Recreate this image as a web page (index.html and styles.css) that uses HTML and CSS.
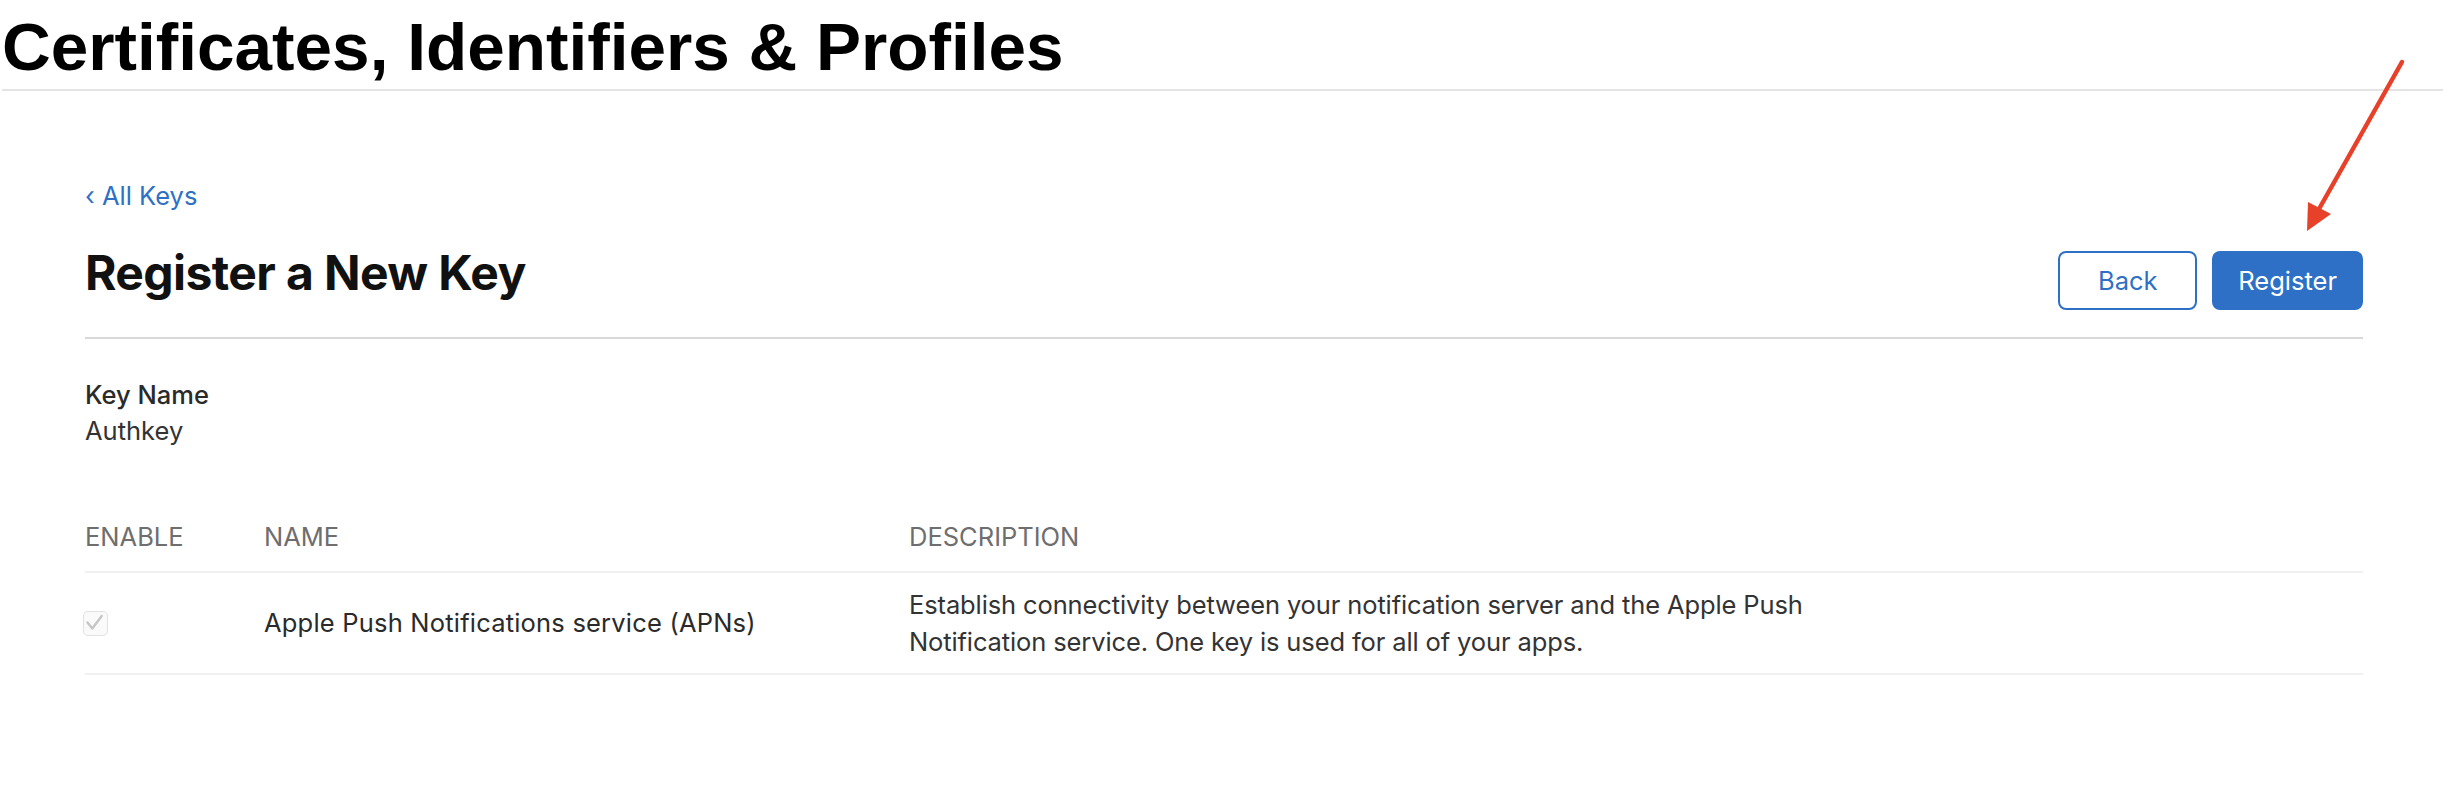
FILE: index.html
```html
<!DOCTYPE html>
<html lang="en">
<head>
<meta charset="utf-8">
<title>Register a New Key - Certificates, Identifiers &amp; Profiles</title>
<link rel="stylesheet" href="styles.css">
</head>
<body>
<header class="site-header">
  <h1 class="site-title">Certificates, Identifiers &amp; Profiles</h1>
</header>
<main class="content">
  <a class="back-link" href="#"><span class="chev">‹</span> All Keys</a>
  <div class="page-head">
    <h2 class="page-title">Register a New Key</h2>
    <div class="actions">
      <button class="btn btn-outline" type="button">Back</button>
      <button class="btn btn-primary" type="button">Register</button>
    </div>
  </div>
  <dl class="key-name">
    <dt>Key Name</dt>
    <dd>Authkey</dd>
  </dl>
  <table class="services">
    <colgroup>
      <col class="col-enable">
      <col class="col-name">
      <col>
    </colgroup>
    <thead>
      <tr>
        <th>Enable</th>
        <th>Name</th>
        <th>Description</th>
      </tr>
    </thead>
    <tbody>
      <tr>
        <td><span class="checkbox"><svg viewBox="0 0 25 25" width="25" height="25"><path d="M4.5 12.5 L9.3 18.5 L18.7 6" fill="none" stroke="#c6c6c6" stroke-width="2.4" stroke-linecap="round" stroke-linejoin="round"/></svg></span></td>
        <td class="name">Apple Push Notifications service (APNs)</td>
        <td class="desc"><p>Establish connectivity between your notification server and the Apple Push Notification service. One key is used for all of your apps.</p></td>
      </tr>
    </tbody>
  </table>
</main>
<svg class="arrow" viewBox="0 0 130 190" width="130" height="190">
  <line x1="112" y1="12" x2="29" y2="159" stroke="#e8412a" stroke-width="4.5" stroke-linecap="round"/>
  <polygon points="17,181 18,152 41,164" fill="#e8412a"/>
</svg>
</body>
</html>
```

FILE: styles.css
```css
* {
  box-sizing: border-box;
}

body {
  margin: 0;
  background: #ffffff;
  color: #333333;
  font-family: Inter, "Noto Sans", sans-serif;
  font-size: 25.5px;
  line-height: 36px;
  position: relative;
}

.site-header {
  margin: 0 16px 0 2px;
  padding: 8px 0 3px;
  border-bottom: 2px solid #e4e4e4;
}

.site-title {
  margin: 0;
  font-family: "Liberation Sans", Arial, sans-serif;
  font-weight: 700;
  font-size: 67.5px;
  line-height: 78px;
  color: #000000;
}

.content {
  margin-left: 85px;
  width: 2278px;
  padding-top: 87px;
}

.back-link {
  display: block;
  color: #2e70c6;
  text-decoration: none;
  font-size: 25.5px;
  line-height: 36px;
}

.chev {
  font-size: 25.5px;
}

.page-head {
  display: flex;
  justify-content: space-between;
  align-items: baseline;
  margin-top: 31px;
  padding-bottom: 27px;
  border-bottom: 2px solid #d9d9d9;
}

.page-title {
  margin: 0;
  font-size: 48px;
  line-height: 56px;
  font-weight: 700;
  color: #111111;
  letter-spacing: -0.6px;
}

.actions {
  display: flex;
  gap: 15px;
  align-items: baseline;
}

.btn {
  height: 59px;
  font-family: Inter, "Noto Sans", sans-serif;
  font-size: 25.5px;
  line-height: 55px;
  border: 2px solid #2e70c6;
  border-radius: 8px;
  padding: 0 24px;
  cursor: pointer;
}

.btn-outline {
  min-width: 139px;
  background: #ffffff;
  color: #2e70c6;
}

.btn-primary {
  min-width: 149px;
  background: #2e70c6;
  color: #ffffff;
}

.key-name {
  margin: 38px 0 0;
}

.key-name dt {
  font-weight: 500;
  color: #2a2a2a;
}

.key-name dd {
  margin: 0;
  color: #333333;
}

.services {
  margin-top: 70px;
  width: 100%;
  border-collapse: collapse;
}

.col-enable {
  width: 179px;
}

.col-name {
  width: 645px;
}

.services th {
  text-align: left;
  font-weight: 400;
  color: #6e6e6e;
  text-transform: uppercase;
  padding: 0 0 16px;
  line-height: 36px;
  border-bottom: 2px solid #f0f0f0;
}

.services td {
  padding: 13px 0;
  vertical-align: middle;
  border-bottom: 2px solid #f0f0f0;
}

.checkbox {
  display: block;
  width: 25px;
  height: 25px;
  margin-left: -2px;
  border: 1.5px solid #e2e2e2;
  border-radius: 5px;
  background: #fafafa;
}

.checkbox svg {
  display: block;
  margin: -1.5px;
}

.name {
  color: #2a2a2a;
  letter-spacing: 0.2px;
}

.desc p {
  margin: 0;
  max-width: 905px;
  line-height: 37px;
  color: #333333;
  letter-spacing: -0.12px;
}

.arrow {
  position: absolute;
  left: 2290px;
  top: 50px;
}
```
